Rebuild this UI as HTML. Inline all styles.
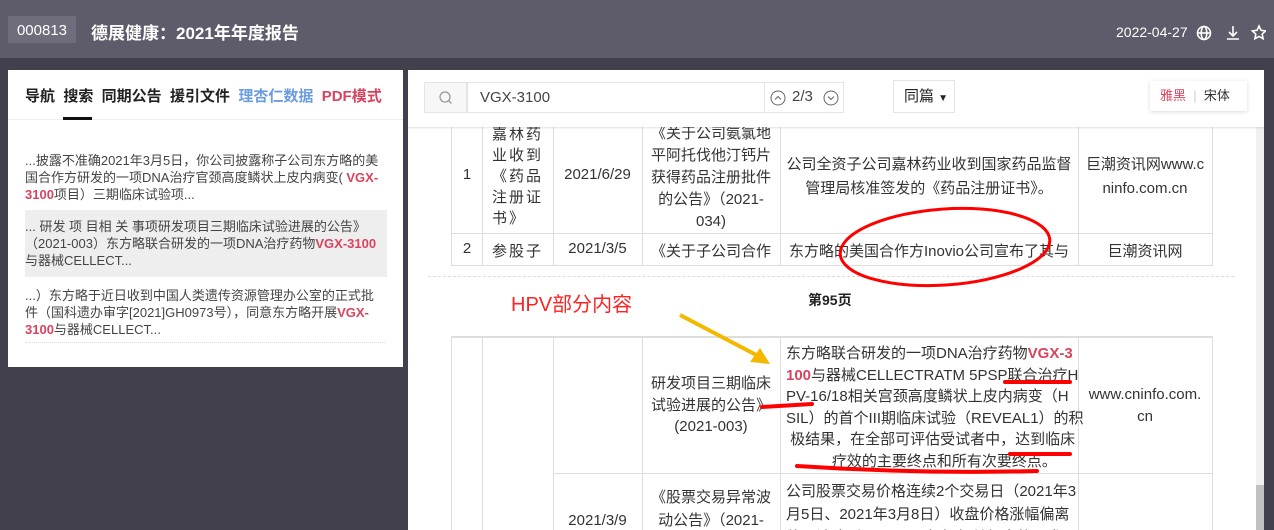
<!DOCTYPE html>
<html><head><meta charset="utf-8"><style>
*{margin:0;padding:0;box-sizing:border-box}
body{width:1274px;height:530px;overflow:hidden;background:#42404d;font-family:"Liberation Sans","Noto Sans CJK SC",sans-serif;position:relative;color:#333}
.a{position:absolute;white-space:nowrap}
.hdr{position:absolute;left:0;top:0;width:1274px;height:58px;background:#5e5c6b}
.r{color:#d9435e;font-weight:bold}
.c{text-align:center}
.t{font-size:15px;color:#333}
.vl{position:absolute;width:1px;background:#ddd}
.hl{position:absolute;height:1px;background:#ddd}
</style></head><body>
<div class="hdr">
 <div class="a" style="left:8px;top:16px;width:68px;height:27px;background:#6f6d7b;color:#fff;font-size:15px;line-height:29px;text-align:center">000813</div>
 <div class="a" style="left:91px;top:19px;color:#fff;font-size:17px;font-weight:bold">德展健康：2021年年度报告</div>
 <div class="a" style="left:1116px;top:24px;color:#fff;font-size:14px">2022-04-27</div>
 <svg class="a" style="left:1196px;top:24px" width="70" height="18" viewBox="0 0 70 18" fill="none" stroke="#fff" stroke-width="1.6">
  <circle cx="8" cy="9" r="6.5"/><ellipse cx="8" cy="9" rx="2.8" ry="6.5"/><line x1="1.5" y1="9" x2="14.5" y2="9"/>
  <path d="M37 2v10M33 8l4 4 4-4M31 15h12"/>
  <path d="M63 2l2 4.3 4.6.6-3.4 3.2.9 4.6-4.1-2.3-4.1 2.3.9-4.6-3.4-3.2 4.6-.6z"/>
 </svg>
</div>
<!-- left panel -->
<div class="a" style="left:8px;top:70px;width:395px;height:297px;background:#fff"></div>
<div class="hl" style="left:8px;top:119px;width:395px;background:#eee"></div>
<div class="a" style="left:25px;top:85px;font-size:15px;font-weight:bold;color:#222">导航&nbsp; 搜索&nbsp; 同期公告&nbsp; 援引文件&nbsp; <span style="color:#6b9be0">理杏仁数据</span>&nbsp; <span style="color:#d9435e">PDF模式</span></div>
<div class="a" style="left:63px;top:117px;width:29px;height:3px;background:#111"></div>
<div class="a" style="left:25px;top:152px;width:360px;font-size:13px;line-height:17px;white-space:normal;color:#444">...披露不准确2021年3月5日，你公司披露称子公司东方略的美国合作方研发的一项DNA治疗官颈高度鳞状上皮内病变( <span class="r">VGX-3100</span>项目）三期临床试验项...</div>
<div class="a" style="left:25px;top:210px;width:362px;height:67px;background:#eee"></div>
<div class="a" style="left:25px;top:218px;width:360px;font-size:13px;line-height:17px;white-space:normal;color:#444">... 研发 项 目相 关 事项研发项目三期临床试验进展的公告》（2021-003）东方略联合研发的一项DNA治疗药物<span class="r">VGX-3100</span>与器械CELLECT...</div>
<div class="a" style="left:25px;top:287px;width:360px;font-size:13px;line-height:17px;white-space:normal;color:#444">...）东方略于近日收到中国人类遗传资源管理办公室的正式批件（国科遗办审字[2021]GH0973号），同意东方略开展<span class="r">VGX-3100</span>与器械CELLECT...</div>
<div class="a" style="left:25px;top:342px;width:360px;border-top:1px dotted #ddd"></div>
<!-- right panel -->
<div class="a" style="left:408px;top:70px;width:856px;height:460px;background:#fff;overflow:hidden">
 <div class="a" style="left:848px;top:57px;width:8px;height:403px;background:#f1f1f1"></div>
 <div class="a" style="left:848px;top:415px;width:8px;height:45px;background:#c1c1c1"></div>
 <!-- table 1 -->
 <div class="vl" style="left:43px;top:57px;height:139px"></div>
 <div class="vl" style="left:74px;top:57px;height:139px"></div>
 <div class="vl" style="left:145px;top:57px;height:139px"></div>
 <div class="vl" style="left:234px;top:57px;height:139px"></div>
 <div class="vl" style="left:372px;top:57px;height:139px"></div>
 <div class="vl" style="left:670px;top:57px;height:139px"></div>
 <div class="vl" style="left:804px;top:57px;height:139px"></div>
 <div class="hl" style="left:43px;top:163px;width:762px"></div>
 <div class="hl" style="left:43px;top:195px;width:762px"></div>
 <div class="a t c" style="left:44px;top:96px;width:30px">1</div>
 <div class="a t" style="left:84px;top:54px;line-height:21px;letter-spacing:2px;white-space:normal;width:52px">嘉林药<br>业收到<br>《药品<br>注册证<br>书》</div>
 <div class="a t c" style="left:145px;top:96px;width:89px">2021/6/29</div>
 <div class="a t c" style="left:234px;top:53px;width:138px;line-height:22px">《关于公司氨氯地<br>平阿托伐他汀钙片<br>获得药品注册批件<br>的公告》（2021-<br>034)</div>
 <div class="a t c" style="left:372px;top:83px;width:298px;line-height:24px">公司全资子公司嘉林药业收到国家药品监督<br>管理局核准签发的《药品注册证书》。</div>
 <div class="a t c" style="left:670px;top:83px;width:134px;line-height:24px">巨潮资讯网www.c<br>ninfo.com.cn</div>
 <div class="a t c" style="left:44px;top:170px;width:30px">2</div>
 <div class="a t" style="left:84px;top:170px;letter-spacing:2px">参股子</div>
 <div class="a t c" style="left:145px;top:170px;width:89px">2021/3/5</div>
 <div class="a t c" style="left:234px;top:170px;width:138px">《关于子公司合作</div>
 <div class="a t c" style="left:372px;top:170px;width:298px">东方略的美国合作方Inovio公司宣布了其与</div>
 <div class="a t c" style="left:670px;top:170px;width:134px">巨潮资讯网</div>
 <div class="a" style="left:20px;top:206px;width:806px;border-top:1px dashed #ddd"></div>
 <div class="a" style="left:400px;top:220px;font-size:14px;font-weight:bold;color:#222">第95页</div>
 <div class="a" style="left:103px;top:218px;font-size:20px;color:#f22">HPV部分内容</div>
 <!-- table 2 -->
 <div class="a" style="left:43px;top:266px;width:762px;height:2px;background:#ddd"></div>
 <div class="vl" style="left:43px;top:266px;height:200px"></div>
 <div class="vl" style="left:74px;top:266px;height:200px"></div>
 <div class="vl" style="left:145px;top:266px;height:200px"></div>
 <div class="vl" style="left:234px;top:266px;height:200px"></div>
 <div class="vl" style="left:372px;top:266px;height:200px"></div>
 <div class="vl" style="left:670px;top:266px;height:200px"></div>
 <div class="vl" style="left:804px;top:266px;height:200px"></div>
 <div class="hl" style="left:145px;top:403px;width:660px"></div>
 <div class="a t" style="left:378px;top:273px;line-height:21.5px">东方略联合研发的一项DNA治疗药物<span class="r">VGX-3</span><br><span class="r">100</span>与器械CELLECTRATM 5PSP联合治疗H<br>PV-16/18相关宫颈高度鳞状上皮内病变（H<br>SIL）的首个III期临床试验（REVEAL1）的积<br>&nbsp;极结果，在全部可评估受试者中，达到临床<br>&nbsp;&nbsp;&nbsp;&nbsp;&nbsp;&nbsp;&nbsp;&nbsp;&nbsp;&nbsp;&nbsp;疗效的主要终点和所有次要终点。</div>
 <div class="a t c" style="left:234px;top:303px;width:138px;line-height:21.5px">研发项目三期临床<br>试验进展的公告》<br>(2021-003)</div>
 <div class="a t c" style="left:670px;top:314px;width:134px;line-height:21.5px">www.cninfo.com.<br>cn</div>
 <div class="a t" style="left:378px;top:410px;line-height:23px">公司股票交易价格连续2个交易日（2021年3<br>月5日、2021年3月8日）收盘价格涨幅偏离<br>值累计达到22.07%，根据相关规定的要求</div>
 <div class="a t c" style="left:234px;top:416px;width:138px;line-height:23px">《股票交易异常波<br>动公告》（2021-</div>
 <div class="a t c" style="left:145px;top:442px;width:89px">2021/3/9</div>
 <!-- top bar -->
 <div class="a" style="left:0;top:0;width:856px;height:57px;background:#fff;box-shadow:0 1px 2px rgba(0,0,0,.12)"></div>
 <div class="a" style="left:16px;top:12px;width:43px;height:31px;border:1px solid #e5e5e5;background:#f7f7f7"></div>
 <svg class="a" style="left:30px;top:20px" width="16" height="16" fill="none" stroke="#999" stroke-width="1.3"><circle cx="7" cy="7" r="5"/><path d="M10.5 10.5l3 3"/></svg>
 <div class="a" style="left:59px;top:12px;width:298px;height:31px;border:1px solid #e5e5e5;font-size:15px;line-height:29px;padding-left:12px;color:#444">VGX-3100</div>
 <div class="a" style="left:357px;top:12px;width:79px;height:31px;border:1px solid #e5e5e5;border-left:none"></div>
 <svg class="a" style="left:362px;top:19px" width="70" height="18" fill="none" stroke="#666" stroke-width="1"><circle cx="8" cy="9" r="7"/><path d="M5 10.5l3-3 3 3"/><circle cx="61" cy="9" r="7"/><path d="M58 7.5l3 3 3-3"/></svg>
 <div class="a" style="left:384px;top:18px;font-size:15px;color:#444">2/3</div>
 <div class="a" style="left:485px;top:10px;width:62px;height:33px;border:1px solid #e5e5e5;font-size:15px;line-height:31px;padding-left:10px;color:#222">同篇 <span style="font-size:10px">▼</span></div>
 <div class="a" style="left:742px;top:11px;width:97px;height:30px;background:#fff;box-shadow:0 1px 4px rgba(0,0,0,.15);font-size:13px;line-height:30px;padding-left:10px;color:#333"><span style="color:#e0435e">雅黑</span>&nbsp; <span style="color:#ccc">|</span>&nbsp; 宋体</div>
</div>
<!-- annotations -->
<svg class="a" style="left:0;top:0" width="1274" height="530" fill="none">
 <ellipse cx="945" cy="247" rx="105" ry="38" stroke="#f00" stroke-width="3" transform="rotate(-4 945 247)"/>
 <path d="M680 315L762 358" stroke="#f5b800" stroke-width="4"/>
 <path d="M770 364l-20-2 10-14z" fill="#f5b800"/>
 <path d="M1005 382h65M762 407l50-3M1010 454h60M797 466q120 8 240 5" stroke="#f00" stroke-width="4" stroke-linecap="round"/>
</svg>
</body></html>
